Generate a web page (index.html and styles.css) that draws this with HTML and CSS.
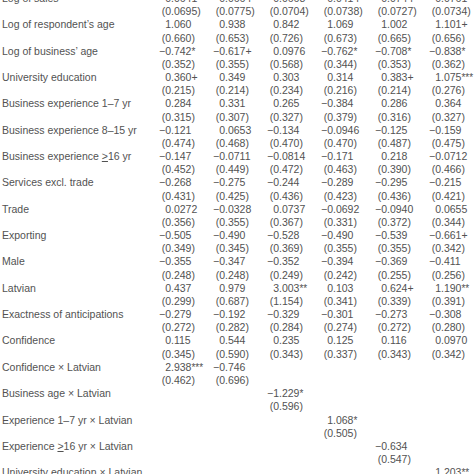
FILE: index.html
```html
<!DOCTYPE html>
<html>
<head>
<meta charset="utf-8">
<link rel="stylesheet" href="styles.css">
</head>
<body>
<div class="tbl">
  <div class="row"><div class="lab">Log of sales</div>
    <div class="c"><span class="i">0</span>.0641</div><div class="c"><span class="i">0</span>.0664</div><div class="c"><span class="i">0</span>.0668</div><div class="c"><span class="i">0</span>.0414</div><div class="c"><span class="i">0</span>.0744</div><div class="c"><span class="i">0</span>.0761</div>
    <div class="lab"></div>
    <div class="c"><span class="i">(0</span>.0695)</div><div class="c"><span class="i">(0</span>.0775)</div><div class="c"><span class="i">(0</span>.0704)</div><div class="c"><span class="i">(0</span>.0738)</div><div class="c"><span class="i">(0</span>.0727)</div><div class="c"><span class="i">(0</span>.0734)</div>
  </div>
  <div class="row"><div class="lab">Log of respondent’s age</div>
    <div class="c"><span class="i">1</span>.060</div><div class="c"><span class="i">0</span>.938</div><div class="c"><span class="i">0</span>.842</div><div class="c"><span class="i">1</span>.069</div><div class="c"><span class="i">1</span>.002</div><div class="c"><span class="i">1</span>.101+</div>
    <div class="lab"></div>
    <div class="c"><span class="i">(0</span>.660)</div><div class="c"><span class="i">(0</span>.653)</div><div class="c"><span class="i">(0</span>.726)</div><div class="c"><span class="i">(0</span>.673)</div><div class="c"><span class="i">(0</span>.665)</div><div class="c"><span class="i">(0</span>.656)</div>
  </div>
  <div class="row"><div class="lab">Log of business’ age</div>
    <div class="c"><span class="i">−0</span>.742<span class="s">*</span></div><div class="c"><span class="i">−0</span>.617+</div><div class="c"><span class="i">0</span>.0976</div><div class="c"><span class="i">−0</span>.762<span class="s">*</span></div><div class="c"><span class="i">−0</span>.708<span class="s">*</span></div><div class="c"><span class="i">−0</span>.838<span class="s">*</span></div>
    <div class="lab"></div>
    <div class="c"><span class="i">(0</span>.352)</div><div class="c"><span class="i">(0</span>.355)</div><div class="c"><span class="i">(0</span>.568)</div><div class="c"><span class="i">(0</span>.344)</div><div class="c"><span class="i">(0</span>.353)</div><div class="c"><span class="i">(0</span>.362)</div>
  </div>
  <div class="row"><div class="lab">University education</div>
    <div class="c"><span class="i">0</span>.360+</div><div class="c"><span class="i">0</span>.349</div><div class="c"><span class="i">0</span>.303</div><div class="c"><span class="i">0</span>.314</div><div class="c"><span class="i">0</span>.383+</div><div class="c"><span class="i">1</span>.075<span class="s">***</span></div>
    <div class="lab"></div>
    <div class="c"><span class="i">(0</span>.215)</div><div class="c"><span class="i">(0</span>.214)</div><div class="c"><span class="i">(0</span>.234)</div><div class="c"><span class="i">(0</span>.216)</div><div class="c"><span class="i">(0</span>.214)</div><div class="c"><span class="i">(0</span>.276)</div>
  </div>
  <div class="row"><div class="lab">Business experience 1–7 yr</div>
    <div class="c"><span class="i">0</span>.284</div><div class="c"><span class="i">0</span>.331</div><div class="c"><span class="i">0</span>.265</div><div class="c"><span class="i">−0</span>.384</div><div class="c"><span class="i">0</span>.286</div><div class="c"><span class="i">0</span>.364</div>
    <div class="lab"></div>
    <div class="c"><span class="i">(0</span>.315)</div><div class="c"><span class="i">(0</span>.307)</div><div class="c"><span class="i">(0</span>.327)</div><div class="c"><span class="i">(0</span>.379)</div><div class="c"><span class="i">(0</span>.316)</div><div class="c"><span class="i">(0</span>.327)</div>
  </div>
  <div class="row"><div class="lab">Business experience 8–15 yr</div>
    <div class="c"><span class="i">−0</span>.121</div><div class="c"><span class="i">0</span>.0653</div><div class="c"><span class="i">−0</span>.134</div><div class="c"><span class="i">−0</span>.0946</div><div class="c"><span class="i">−0</span>.125</div><div class="c"><span class="i">−0</span>.159</div>
    <div class="lab"></div>
    <div class="c"><span class="i">(0</span>.474)</div><div class="c"><span class="i">(0</span>.468)</div><div class="c"><span class="i">(0</span>.470)</div><div class="c"><span class="i">(0</span>.470)</div><div class="c"><span class="i">(0</span>.487)</div><div class="c"><span class="i">(0</span>.475)</div>
  </div>
  <div class="row"><div class="lab">Business experience <span class="ge">&gt;</span>16 yr</div>
    <div class="c"><span class="i">−0</span>.147</div><div class="c"><span class="i">−0</span>.0711</div><div class="c"><span class="i">−0</span>.0814</div><div class="c"><span class="i">−0</span>.171</div><div class="c"><span class="i">0</span>.218</div><div class="c"><span class="i">−0</span>.0712</div>
    <div class="lab"></div>
    <div class="c"><span class="i">(0</span>.452)</div><div class="c"><span class="i">(0</span>.449)</div><div class="c"><span class="i">(0</span>.472)</div><div class="c"><span class="i">(0</span>.463)</div><div class="c"><span class="i">(0</span>.390)</div><div class="c"><span class="i">(0</span>.466)</div>
  </div>
  <div class="row"><div class="lab">Services excl. trade</div>
    <div class="c"><span class="i">−0</span>.268</div><div class="c"><span class="i">−0</span>.275</div><div class="c"><span class="i">−0</span>.244</div><div class="c"><span class="i">−0</span>.289</div><div class="c"><span class="i">−0</span>.295</div><div class="c"><span class="i">−0</span>.215</div>
    <div class="lab"></div>
    <div class="c"><span class="i">(0</span>.431)</div><div class="c"><span class="i">(0</span>.425)</div><div class="c"><span class="i">(0</span>.436)</div><div class="c"><span class="i">(0</span>.423)</div><div class="c"><span class="i">(0</span>.436)</div><div class="c"><span class="i">(0</span>.421)</div>
  </div>
  <div class="row"><div class="lab">Trade</div>
    <div class="c"><span class="i">0</span>.0272</div><div class="c"><span class="i">−0</span>.0328</div><div class="c"><span class="i">0</span>.0737</div><div class="c"><span class="i">−0</span>.0692</div><div class="c"><span class="i">−0</span>.0940</div><div class="c"><span class="i">0</span>.0655</div>
    <div class="lab"></div>
    <div class="c"><span class="i">(0</span>.356)</div><div class="c"><span class="i">(0</span>.355)</div><div class="c"><span class="i">(0</span>.367)</div><div class="c"><span class="i">(0</span>.331)</div><div class="c"><span class="i">(0</span>.372)</div><div class="c"><span class="i">(0</span>.344)</div>
  </div>
  <div class="row"><div class="lab">Exporting</div>
    <div class="c"><span class="i">−0</span>.505</div><div class="c"><span class="i">−0</span>.490</div><div class="c"><span class="i">−0</span>.528</div><div class="c"><span class="i">−0</span>.490</div><div class="c"><span class="i">−0</span>.539</div><div class="c"><span class="i">−0</span>.661+</div>
    <div class="lab"></div>
    <div class="c"><span class="i">(0</span>.349)</div><div class="c"><span class="i">(0</span>.345)</div><div class="c"><span class="i">(0</span>.369)</div><div class="c"><span class="i">(0</span>.355)</div><div class="c"><span class="i">(0</span>.355)</div><div class="c"><span class="i">(0</span>.342)</div>
  </div>
  <div class="row"><div class="lab">Male</div>
    <div class="c"><span class="i">−0</span>.355</div><div class="c"><span class="i">−0</span>.347</div><div class="c"><span class="i">−0</span>.352</div><div class="c"><span class="i">−0</span>.394</div><div class="c"><span class="i">−0</span>.369</div><div class="c"><span class="i">−0</span>.411</div>
    <div class="lab"></div>
    <div class="c"><span class="i">(0</span>.248)</div><div class="c"><span class="i">(0</span>.248)</div><div class="c"><span class="i">(0</span>.249)</div><div class="c"><span class="i">(0</span>.242)</div><div class="c"><span class="i">(0</span>.255)</div><div class="c"><span class="i">(0</span>.256)</div>
  </div>
  <div class="row"><div class="lab">Latvian</div>
    <div class="c"><span class="i">0</span>.437</div><div class="c"><span class="i">0</span>.979</div><div class="c"><span class="i">3</span>.003<span class="s">**</span></div><div class="c"><span class="i">0</span>.103</div><div class="c"><span class="i">0</span>.624+</div><div class="c"><span class="i">1</span>.190<span class="s">**</span></div>
    <div class="lab"></div>
    <div class="c"><span class="i">(0</span>.299)</div><div class="c"><span class="i">(0</span>.687)</div><div class="c"><span class="i">(1</span>.154)</div><div class="c"><span class="i">(0</span>.341)</div><div class="c"><span class="i">(0</span>.339)</div><div class="c"><span class="i">(0</span>.391)</div>
  </div>
  <div class="row"><div class="lab">Exactness of anticipations</div>
    <div class="c"><span class="i">−0</span>.279</div><div class="c"><span class="i">−0</span>.192</div><div class="c"><span class="i">−0</span>.329</div><div class="c"><span class="i">−0</span>.301</div><div class="c"><span class="i">−0</span>.273</div><div class="c"><span class="i">−0</span>.308</div>
    <div class="lab"></div>
    <div class="c"><span class="i">(0</span>.272)</div><div class="c"><span class="i">(0</span>.282)</div><div class="c"><span class="i">(0</span>.284)</div><div class="c"><span class="i">(0</span>.274)</div><div class="c"><span class="i">(0</span>.272)</div><div class="c"><span class="i">(0</span>.280)</div>
  </div>
  <div class="row"><div class="lab">Confidence</div>
    <div class="c"><span class="i">0</span>.115</div><div class="c"><span class="i">0</span>.544</div><div class="c"><span class="i">0</span>.235</div><div class="c"><span class="i">0</span>.125</div><div class="c"><span class="i">0</span>.116</div><div class="c"><span class="i">0</span>.0970</div>
    <div class="lab"></div>
    <div class="c"><span class="i">(0</span>.345)</div><div class="c"><span class="i">(0</span>.590)</div><div class="c"><span class="i">(0</span>.343)</div><div class="c"><span class="i">(0</span>.337)</div><div class="c"><span class="i">(0</span>.343)</div><div class="c"><span class="i">(0</span>.342)</div>
  </div>
  <div class="row"><div class="lab">Confidence × Latvian</div>
    <div class="c"><span class="i">2</span>.938<span class="s">***</span></div><div class="c"><span class="i">−0</span>.746</div><div class="c"></div><div class="c"></div><div class="c"></div><div class="c"></div>
    <div class="lab"></div>
    <div class="c"><span class="i">(0</span>.462)</div><div class="c"><span class="i">(0</span>.696)</div><div class="c"></div><div class="c"></div><div class="c"></div><div class="c"></div>
  </div>
  <div class="row"><div class="lab">Business age × Latvian</div>
    <div class="c"></div><div class="c"></div><div class="c"><span class="i">−1</span>.229<span class="s">*</span></div><div class="c"></div><div class="c"></div><div class="c"></div>
    <div class="lab"></div>
    <div class="c"></div><div class="c"></div><div class="c"><span class="i">(0</span>.596)</div><div class="c"></div><div class="c"></div><div class="c"></div>
  </div>
  <div class="row"><div class="lab">Experience 1–7 yr × Latvian</div>
    <div class="c"></div><div class="c"></div><div class="c"></div><div class="c"><span class="i">1</span>.068<span class="s">*</span></div><div class="c"></div><div class="c"></div>
    <div class="lab"></div>
    <div class="c"></div><div class="c"></div><div class="c"></div><div class="c"><span class="i">(0</span>.505)</div><div class="c"></div><div class="c"></div>
  </div>
  <div class="row"><div class="lab">Experience <span class="ge">&gt;</span>16 yr × Latvian</div>
    <div class="c"></div><div class="c"></div><div class="c"></div><div class="c"></div><div class="c"><span class="i">−0</span>.634</div><div class="c"></div>
    <div class="lab"></div>
    <div class="c"></div><div class="c"></div><div class="c"></div><div class="c"></div><div class="c"><span class="i">(0</span>.547)</div><div class="c"></div>
  </div>
  <div class="row"><div class="lab">University education × Latvian</div>
    <div class="c"></div><div class="c"></div><div class="c"></div><div class="c"></div><div class="c"></div><div class="c"><span class="i">1</span>.203<span class="s">**</span></div>
    <div class="lab"></div>
    <div class="c"></div><div class="c"></div><div class="c"></div><div class="c"></div><div class="c"></div><div class="c"><span class="i">(0</span>.452)</div>
  </div>
</div>
</body>
</html>
```
FILE: styles.css
```css
html, body {
  margin: 0;
  padding: 0;
  background: #ffffff;
  overflow: hidden;
}
body {
  width: 474px;
  height: 474px;
  font-family: "Liberation Sans", Arial, sans-serif;
  font-size: 10.5px;
  color: #525252;
}
.tbl {
  margin-top: -8px;
}
.row {
  display: grid;
  grid-template-columns: 159px repeat(6, 54px);
  grid-auto-rows: 13.18px;
  line-height: 13.18px;
  white-space: nowrap;
}
.lab {
  padding-left: 2px;
  letter-spacing: 0;
}
.c {
  white-space: nowrap;
}
.i {
  display: inline-block;
  width: 12px;
  text-align: right;
}
.s {
  font-size: 10px;
}
.ge {
  text-decoration: underline;
  text-underline-offset: 1px;
}
```
